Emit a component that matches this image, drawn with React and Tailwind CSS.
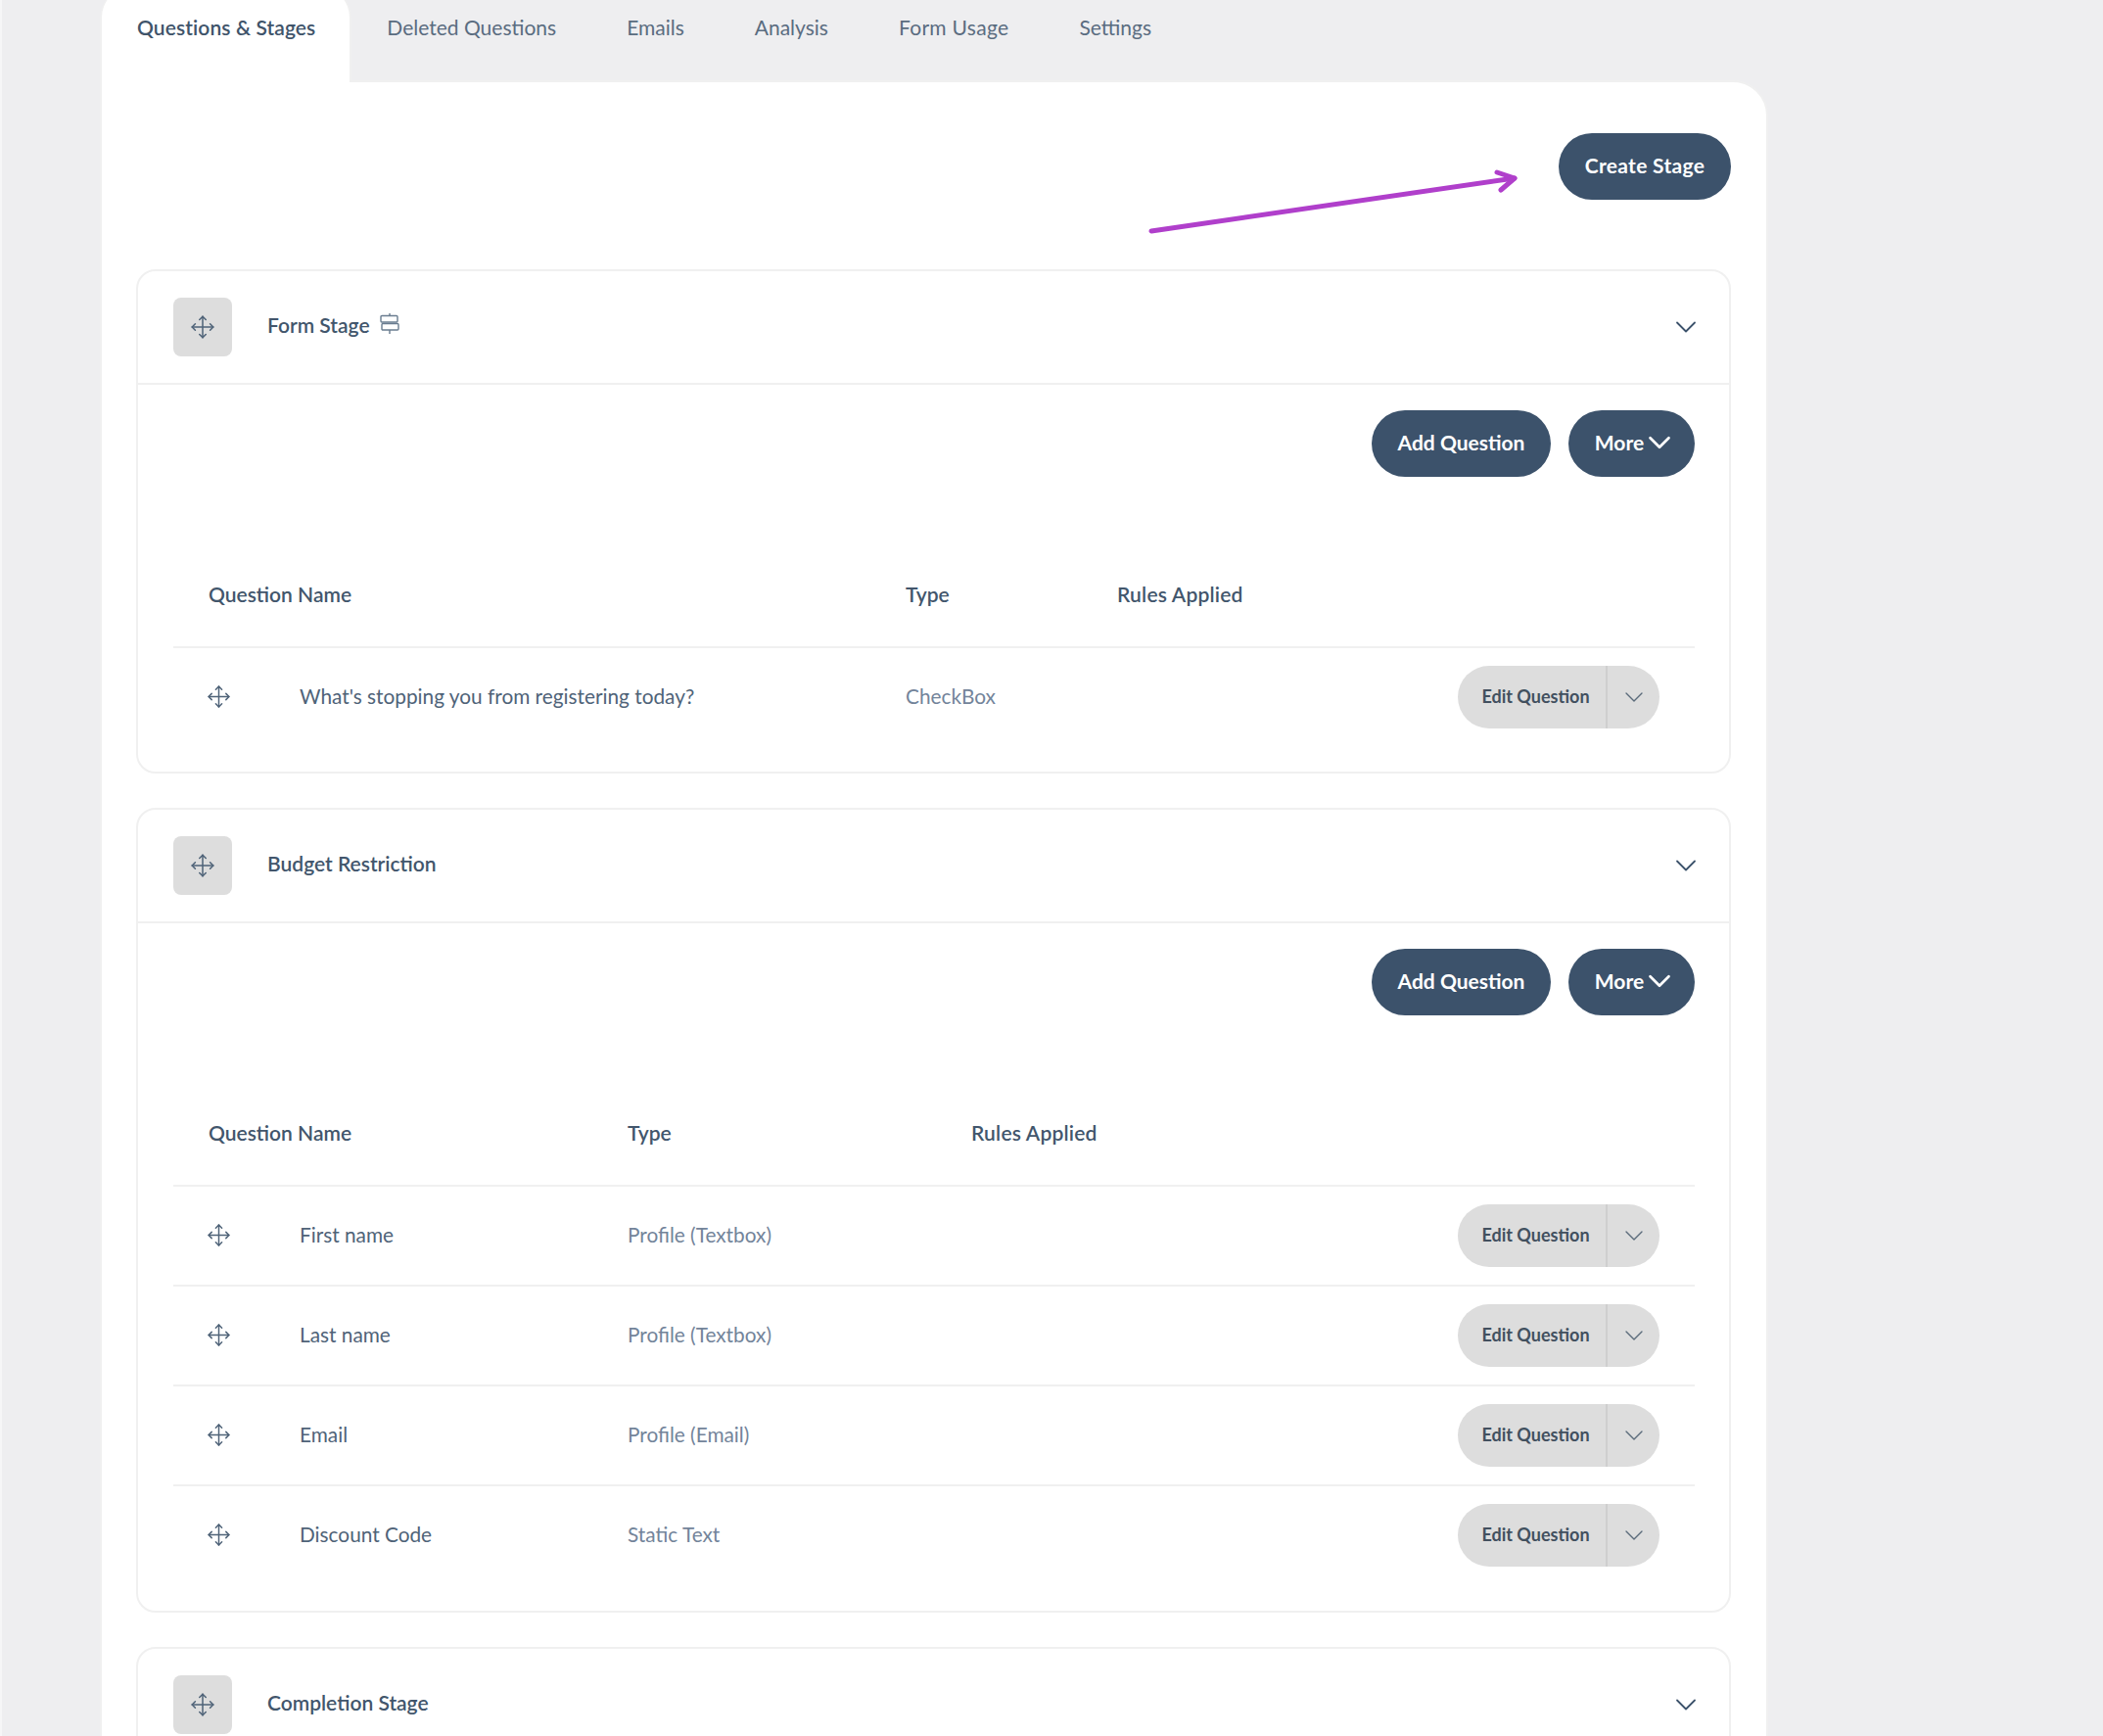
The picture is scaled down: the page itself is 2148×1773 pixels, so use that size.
import React from 'react'
import { ChevronDown, Move } from 'lucide-react'

const tabs = [
  { label: 'Questions & Stages', className: 'relative z-10 -mt-3 h-[96px] rounded-t-[30px] border-x-2 border-[#f0f0f0] bg-white pl-[36px] pr-[35px] pt-[24px] font-semibold tracking-[0.1px] text-[#3f546a]' },
  { label: 'Deleted Questions', className: 'px-9 pt-3 text-[#5a6c80]' },
  { label: 'Emails', className: 'px-9 pt-3 text-[#5a6c80]' },
  { label: 'Analysis', className: 'px-9 pt-3 text-[#5a6c80]' },
  { label: 'Form Usage', className: 'px-9 pt-3 tracking-[0.3px] text-[#5a6c80]' },
  { label: 'Settings', className: 'px-9 pt-3 text-[#5a6c80]' },
]

const budgetRows = [
  { name: 'First name', type: 'Profile (Textbox)' },
  { name: 'Last name', type: 'Profile (Textbox)' },
  { name: 'Email', type: 'Profile (Email)' },
  { name: 'Discount Code', type: 'Static Text' },
]

function SignIcon() {
  return (
    <svg width="20" height="21" viewBox="0 0 20 21" fill="none" stroke="#6a7d90" strokeWidth="1.4" className="ml-[10px] -mt-1">
      <path d="M10 0v2.500M10 17v4" />
      <rect x="1" y="2.500" width="17" height="6.500" rx="1" />
      <rect x="2" y="10.500" width="17" height="6.500" rx="1" />
    </svg>
  )
}

function StageHeader({ title, icon }) {
  return (
    <div className="flex h-[114px] items-center pl-9 pr-[35px]">
      <div className="flex h-[60px] w-[60px] items-center justify-center rounded-lg bg-[#dddddd]">
        <Move size={26} strokeWidth={1.4} className="text-[#4f6378]" />
      </div>
      <div className="-mt-1 ml-9 flex items-center text-[21px] font-semibold text-[#42566c]">
        {title}
        {icon}
      </div>
      <ChevronDown size={36} strokeWidth={1.2} className="-mr-[9px] ml-auto text-[#3c526b]" />
    </div>
  )
}

function Pill({ children, className }) {
  return (
    <button className={`flex h-[68px] items-center justify-center rounded-full bg-[#3c526b] pb-0.5 text-[21px] font-bold text-white ${className}`}>
      {children}
    </button>
  )
}

function StageActions() {
  return (
    <div className="flex justify-end gap-[18px] pt-[26px]">
      <Pill className="w-[183px]">Add Question</Pill>
      <Pill className="w-[129px] gap-[7px]">
        More
        <ChevronDown size={38} strokeWidth={1.7} className="-mx-[10px]" />
      </Pill>
    </div>
  )
}

function QuestionRow({ name, type, nameWidth, last }) {
  return (
    <div className={`flex h-[102px] items-center border-b-2 ${last ? 'border-transparent' : 'border-[#f0f0f0]'}`}>
      <div className="-mt-0.5 flex w-[93px] justify-center">
        <Move size={25} strokeWidth={1.4} className="text-[#4f6378]" />
      </div>
      <div className={`${nameWidth} pb-[3px] pl-[36px] text-[20.8px] text-[#4f6378]`}>{name}</div>
      <div className="pb-[3px] text-[20.8px] text-[#73849a]">{type}</div>
      <div className="ml-auto mr-9 flex h-[64px] w-[206px] items-center rounded-full bg-[#dddddd]">
        <div className="flex h-full w-[153px] items-center justify-center border-r-2 border-[#cfcfcf] pb-0.5 pl-2 text-[18px] font-bold text-[#42505f]">
          Edit Question
        </div>
        <div className="flex flex-1 justify-center">
          <ChevronDown size={32} strokeWidth={1} className="text-[#5a6a7a]" />
        </div>
      </div>
    </div>
  )
}

function StageTable({ questionWidth, typeWidth, nameWidth, rows }) {
  return (
    <div>
      <div className="flex h-[175px] items-end border-b-2 border-[#f0f0f0] pb-[38px] pl-9 text-[21px] font-semibold text-[#42566c]">
        <div className={questionWidth}>Question Name</div>
        <div className={typeWidth}>Type</div>
        <div className="tracking-[0.2px]">Rules Applied</div>
      </div>
      {rows.map((row, i) => (
        <QuestionRow key={row.name} {...row} nameWidth={nameWidth} last={i === rows.length - 1} />
      ))}
    </div>
  )
}

export default function App() {
  return (
    <div className="h-[1773px] overflow-hidden border-l-2 border-[#f6f6f7] bg-[#eeeef0] font-['Lato','Liberation_Sans',sans-serif]">
      <div className="ml-[100px] w-[1704px]">
        <div className="flex h-[82px] text-[21px]">
          {tabs.map((tab) => (
            <div key={tab.label} className={tab.className}>
              {tab.label}
            </div>
          ))}
        </div>
        <div className="relative h-[1800px] rounded-tr-[36px] border-2 border-[#f0f0f0] bg-white pl-[35px] pr-9">
          <div className="flex h-[191px] items-start justify-end pt-[52px]">
            <svg width="380" height="70" viewBox="0 0 380 70" fill="none" stroke="#b03fcb" strokeWidth="5" strokeLinecap="round" strokeLinejoin="round" className="mr-[39px] mt-[37px]">
              <path d="M3 63L374 9" />
              <path d="M356 3L374 9L360 21" />
            </svg>
            <Pill className="w-[176px] tracking-[0.3px]">Create Stage</Pill>
          </div>
          <div className="flex flex-col gap-[35px]">
            <section className="rounded-[20px] border-2 border-[#f0f0f0]">
              <StageHeader title="Form Stage" icon={<SignIcon />} />
              <div className="border-t-2 border-[#f0f0f0] pb-[24px] pl-9 pr-[35px]">
                <StageActions />
                <StageTable
                  questionWidth="w-[712px]"
                  typeWidth="w-[216px]"
                  nameWidth="w-[655px]"
                  rows={[{ name: "What's stopping you from registering today?", type: 'CheckBox' }]}
                />
              </div>
            </section>
            <section className="rounded-[20px] border-2 border-[#f0f0f0]">
              <StageHeader title="Budget Restriction" />
              <div className="border-t-2 border-[#f0f0f0] pb-[25px] pl-9 pr-[35px]">
                <StageActions />
                <StageTable
                  questionWidth="w-[428px]"
                  typeWidth="w-[351px]"
                  nameWidth="w-[371px]"
                  rows={budgetRows}
                />
              </div>
            </section>
            <section className="rounded-[20px] border-2 border-[#f0f0f0]">
              <StageHeader title="Completion Stage" />
            </section>
          </div>
        </div>
      </div>
    </div>
  )
}
